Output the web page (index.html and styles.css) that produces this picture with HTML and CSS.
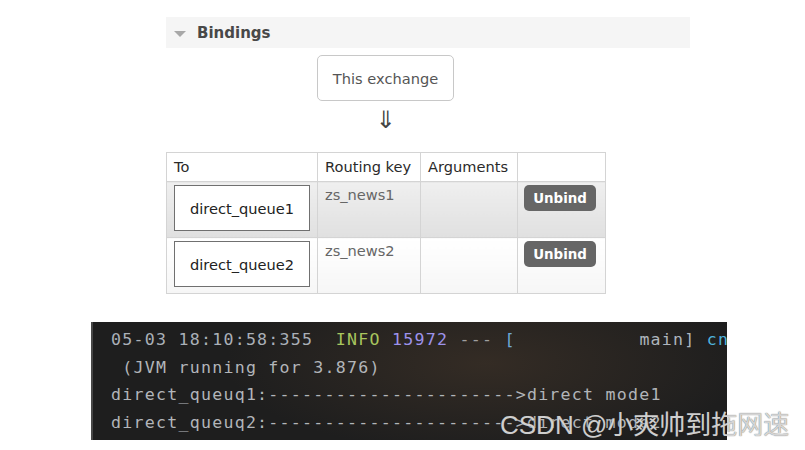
FILE: index.html
```html
<!DOCTYPE html>
<html lang="en">
<head>
<meta charset="utf-8">
<title>Bindings</title>
<link rel="stylesheet" href="styles.css">
</head>
<body>
<div class="page">
  <section class="bindings">
    <div class="section-head">
      <span class="tri"></span>
      <h2>Bindings</h2>
    </div>
    <div class="binding-body">
      <div class="exchange-wrap">
        <div class="exchange">This exchange</div>
        <div class="arrow">&#8659;</div>
      </div>
      <table class="list">
        <colgroup>
          <col class="c-to"><col class="c-key"><col class="c-args"><col class="c-act">
        </colgroup>
        <thead>
          <tr><th>To</th><th>Routing key</th><th>Arguments</th><th></th></tr>
        </thead>
        <tbody>
          <tr class="alt1">
            <td><div class="queue">direct_queue1</div></td>
            <td class="key">zs_news1</td>
            <td></td>
            <td><button class="unbind">Unbind</button></td>
          </tr>
          <tr class="alt2">
            <td><div class="queue">direct_queue2</div></td>
            <td class="key">zs_news2</td>
            <td></td>
            <td><button class="unbind">Unbind</button></td>
          </tr>
        </tbody>
      </table>
    </div>
  </section>

  <div class="terminal">
<div class="line"><span class="ts">05-03 18:10:58:355</span>  <span class="info">INFO</span> <span class="pid">15972</span> <span class="dash">---</span> <span class="br">[</span>           <span class="thr">main]</span> <span class="cls">cn</span></div>
<div class="line"> (JVM running for 3.876)</div>
<div class="line">direct_queuq1:---------------------->direct mode1</div>
<div class="line">direct_queuq2:---------------------->direct mode2</div>
  </div>

  <div class="watermark">CSDN @小爽帅到拖网速</div>
</div>
</body>
</html>
```

FILE: styles.css
```css
html, body {
  margin: 0;
  padding: 0;
  background: #ffffff;
}

.page {
  position: relative;
  width: 805px;
  height: 450px;
  overflow: hidden;
  padding-top: 17px;
  box-sizing: border-box;
  font-family: "DejaVu Sans", Verdana, sans-serif;
}

.bindings {
  margin-left: 166px;
  width: 524px;
}

.section-head {
  height: 31px;
  background: #f5f5f5;
  display: flex;
  align-items: center;
  padding-left: 8px;
}

.tri {
  width: 0;
  height: 0;
  border-left: 6px solid transparent;
  border-right: 6px solid transparent;
  border-top: 6px solid #a8a8a8;
  margin-top: 2px;
}

.section-head h2 {
  margin: 0 0 0 11px;
  font-size: 15px;
  font-weight: bold;
  color: #484848;
}

.binding-body {
  width: 439px;
}

.exchange-wrap {
  display: flex;
  flex-direction: column;
  align-items: center;
}

.exchange {
  margin-top: 7px;
  width: 137px;
  height: 46px;
  box-sizing: border-box;
  border: 1px solid #c8c8c8;
  border-radius: 5px;
  display: flex;
  align-items: center;
  justify-content: center;
  font-size: 14.6px;
  color: #555;
}

.arrow {
  height: 38px;
  display: flex;
  align-items: center;
  justify-content: center;
  font-size: 24px;
  line-height: 1;
  color: #444;
}

.list {
  margin-top: 13px;
  width: 439px;
  border-collapse: collapse;
  table-layout: fixed;
  font-size: 14.6px;
}

.c-to { width: 151px; }
.c-key { width: 103px; }
.c-args { width: 97px; }
.c-act { width: 88px; }

.list th, .list td {
  border: 1px solid #d4d4d4;
  padding: 3px 7px;
  text-align: left;
  vertical-align: top;
}

.list th {
  height: 22px;
  font-weight: normal;
  color: #2a2a2a;
  vertical-align: middle;
  padding-top: 2px;
  padding-bottom: 4px;
  background: #ffffff;
}

.list tbody tr {
  height: 56px;
}

.alt1 td {
  background: linear-gradient(#efefef, #e0e0e0);
}

.alt2 td {
  background: linear-gradient(#ffffff, #f6f6f6);
}

.queue {
  width: 136px;
  height: 46px;
  box-sizing: border-box;
  border: 1px solid #707070;
  background: #ffffff;
  display: flex;
  align-items: center;
  justify-content: center;
  color: #222;
}

.key {
  color: #666;
  line-height: 20px;
}

.unbind {
  width: 72px;
  height: 26px;
  border: none;
  border-radius: 5px;
  background: #666;
  color: #fff;
  font-family: "DejaVu Sans", Verdana, sans-serif;
  font-weight: bold;
  font-size: 13.4px;
  padding: 0;
  margin-left: -1px;
}

.terminal {
  margin-left: 91px;
  margin-top: 28px;
  width: 636px;
  height: 118px;
  box-sizing: border-box;
  overflow: hidden;
  border-left: 2px solid #474747;
  padding: 4px 0 0 18px;
  background:
    radial-gradient(ellipse 260px 90px at 62% 35%, rgba(70, 55, 42, 0.55), rgba(30, 30, 30, 0) 100%),
    #1e1e1e;
  font-family: "DejaVu Sans Mono", "Liberation Mono", monospace;
  font-size: 16.6px;
  letter-spacing: 1.25px;
  color: #b2b5b9;
}

.line {
  white-space: pre;
  line-height: 27.5px;
}

.ts { color: #aab0b8; }
.info { color: #a8c65e; }
.pid { color: #9d92ea; }
.dash { color: #9f9f9f; }
.br { color: #6fa6d6; }
.thr { color: #aeb5bc; }
.cls { color: #4fb3dc; }

.watermark {
  position: absolute;
  left: 500px;
  top: 409px;
  font-family: "Liberation Sans", "Noto Sans CJK SC", sans-serif;
  font-size: 26px;
  line-height: 32px;
  white-space: nowrap;
  color: rgba(235, 235, 235, 0.85);
  text-shadow: 0 0 1px rgba(60, 60, 60, 0.9);
}
```
